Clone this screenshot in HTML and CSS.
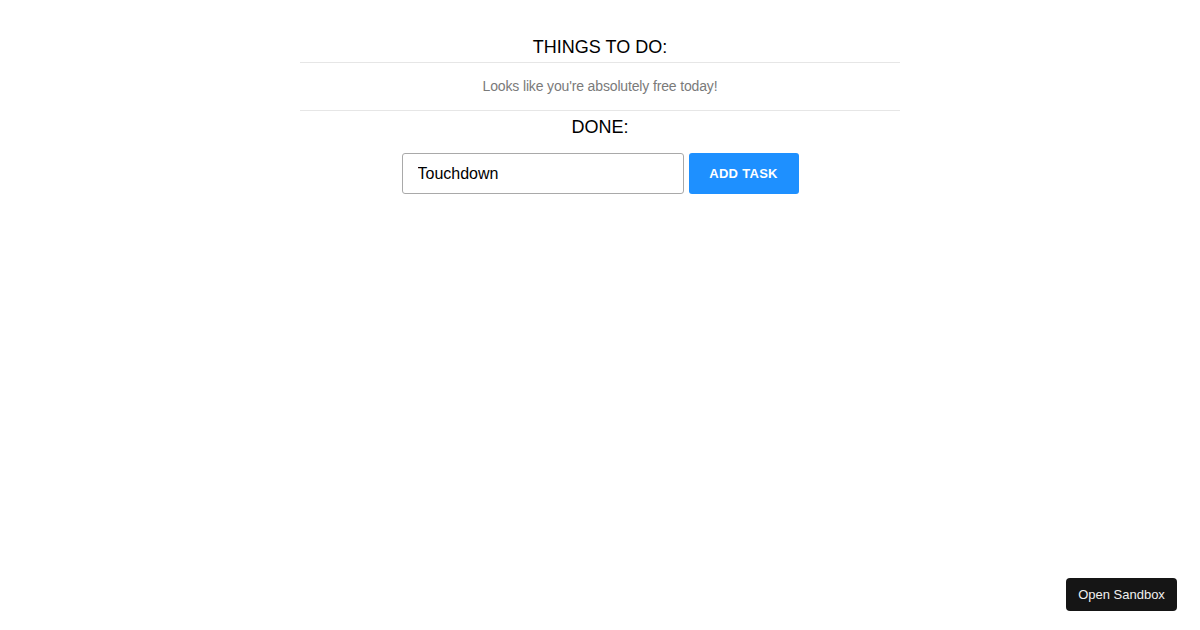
FILE: index.html
```html
<!DOCTYPE html>
<html>
<head>
<meta charset="utf-8">
<link rel="stylesheet" href="styles.css">
</head>
<body>
<div class="app">
  <h2 class="title">THINGS TO DO:</h2>
  <div class="todo-list">
    <p class="empty">Looks like you're absolutely free today!</p>
  </div>
  <h2 class="title done-title">DONE:</h2>
  <form class="add-form">
    <input class="task-input" type="text" value="Touchdown">
    <button class="add-btn" type="button">ADD TASK</button>
  </form>
</div>
<a class="sandbox-btn">Open Sandbox</a>
</body>
</html>
```
FILE: styles.css
```css
html, body {
  margin: 0;
  padding: 0;
  background: #fff;
  font-family: "Liberation Sans", Arial, sans-serif;
}
.app {
  width: 600px;
  margin: 37px auto 0;
  display: flex;
  flex-direction: column;
  align-items: stretch;
}
.title {
  margin: 0;
  font-size: 18px;
  line-height: 21px;
  font-weight: normal;
  text-align: center;
  color: #000;
  padding-bottom: 4px;
}
.todo-list {
  border-top: 1px solid #e6e6e6;
  border-bottom: 1px solid #e6e6e6;
  padding: 15px 0 16px;
}
.empty {
  margin: 0;
  text-align: center;
  font-size: 14px;
  line-height: 16px;
  color: #7a7a7a;
  letter-spacing: -0.15px;
}
.done-title {
  margin-top: 6px;
  padding-bottom: 0;
}
.add-form {
  display: flex;
  justify-content: center;
  gap: 5px;
  margin-top: 15px;
}
.task-input {
  box-sizing: border-box;
  width: 282px;
  height: 41px;
  border: 1px solid #a9a9a9;
  border-radius: 3px;
  padding: 0 15px;
  font-family: "Liberation Sans", Arial, sans-serif;
  font-size: 16px;
  color: #000;
  outline: none;
}
.add-btn {
  box-sizing: border-box;
  width: 110px;
  height: 41px;
  border: none;
  border-radius: 3px;
  background: #1e90ff;
  color: #fff;
  font-family: "Liberation Sans", Arial, sans-serif;
  font-weight: bold;
  font-size: 13px;
  letter-spacing: 0.3px;
}
.sandbox-btn {
  position: fixed;
  right: 23px;
  bottom: 19px;
  width: 111px;
  height: 33px;
  box-sizing: border-box;
  display: flex;
  align-items: center;
  justify-content: center;
  background: #151515;
  color: #f0f0f0;
  border-radius: 4px;
  font-family: "Liberation Sans", Arial, sans-serif;
  font-size: 13px;
}
```
